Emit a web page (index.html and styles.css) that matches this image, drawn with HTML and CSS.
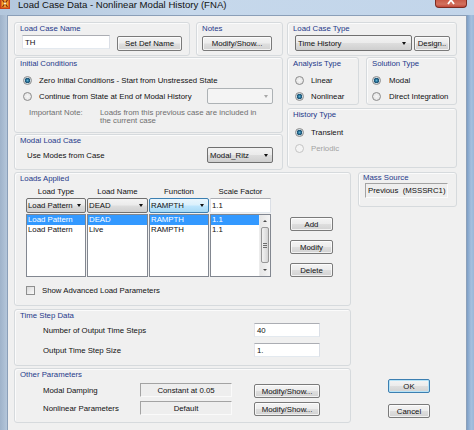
FILE: index.html
```html
<!DOCTYPE html>
<html>
<head>
<meta charset="utf-8">
<title>Load Case Data</title>
<link rel="stylesheet" href="styles.css">
</head>
<body>
<div class="window">
  <div class="titlebar">
    <svg class="appicon" viewBox="0 0 10 9" width="10" height="9">
      <rect x="0" y="0" width="10" height="9" fill="#c9401a"/>
      <rect x="1.5" y="0" width="7" height="7.5" fill="#f5a12a"/>
      <path d="M2.5 0 L7.5 7 M7.5 0 L2.5 7" stroke="#7a2410" stroke-width="1.2"/>
      <rect x="4" y="2.5" width="2" height="2" fill="#fff3c0"/>
    </svg>
    <div class="title">Load Case Data - Nonlinear Modal History (FNA)</div>
    <div class="close">
      <svg viewBox="0 0 32 8" width="32" height="8"><path d="M13 -3 L19 5 M19 -3 L13 5" stroke="#fff" stroke-width="1.8"/></svg>
    </div>
  </div>
  <div class="frame">
    <div class="fl"></div>
    <div class="client">
      <div class="top">
        <div class="col-left">
          <div class="row1">
            <div class="group g-lcn">
              <div class="glabel">Load Case Name</div>
              <div class="line">
                <div class="textbox tb-name">TH</div>
                <div class="btn b-setdef">Set Def Name</div>
              </div>
            </div>
            <div class="group g-notes">
              <div class="glabel">Notes</div>
              <div class="line"><div class="btn b-notes">Modify/Show...</div></div>
            </div>
          </div>
          <div class="group g-ic">
            <div class="glabel">Initial Conditions</div>
            <div class="opt first"><span class="radio on"></span><span>Zero Initial Conditions - Start from Unstressed State</span></div>
            <div class="opt"><span class="radio"></span><span>Continue from State at End of Modal History</span><div class="combo dis c-side"></div></div>
            <div class="note">
              <div class="note-k">Important Note:</div>
              <div class="note-v">Loads from this previous case are included in<br>the current case</div>
            </div>
          </div>
          <div class="group g-mlc">
            <div class="glabel">Modal Load Case</div>
            <div class="line mlc-line">
              <span class="mlc-text">Use Modes from Case</span>
              <div class="combo c-side">Modal_Ritz</div>
            </div>
          </div>
        </div>
        <div class="col-right">
          <div class="group g-lct">
            <div class="glabel">Load Case Type</div>
            <div class="line">
              <div class="combo c-type">Time History</div>
              <div class="btn b-design">Design..</div>
            </div>
          </div>
          <div class="at-st">
            <div class="group g-at">
              <div class="glabel">Analysis Type</div>
              <div class="opt first"><span class="radio"></span><span>Linear</span></div>
              <div class="opt"><span class="radio on"></span><span>Nonlinear</span></div>
            </div>
            <div class="group g-st">
              <div class="glabel">Solution Type</div>
              <div class="opt first"><span class="radio on"></span><span>Modal</span></div>
              <div class="opt"><span class="radio"></span><span>Direct Integration</span></div>
            </div>
          </div>
          <div class="group g-ht">
            <div class="glabel">History Type</div>
            <div class="opt first"><span class="radio on"></span><span>Transient</span></div>
            <div class="opt disabled"><span class="radio dis"></span><span>Periodic</span></div>
          </div>
        </div>
      </div>

      <div class="bottom">
        <div class="col-bl">
          <div class="group g-la">
            <div class="glabel">Loads Applied</div>
            <div class="la-body">
              <div class="ltable">
                <div class="th">Load Type</div>
                <div class="th">Load Name</div>
                <div class="th">Function</div>
                <div class="th">Scale Factor</div>
                <div class="combo c-cell">Load Pattern</div>
                <div class="combo c-cell">DEAD</div>
                <div class="combo c-cell hot">RAMPTH</div>
                <div class="textbox tb-cell">1.1</div>
                <div class="list">
                  <div class="li sel">Load Pattern</div>
                  <div class="li">Load Pattern</div>
                </div>
                <div class="list">
                  <div class="li sel">DEAD</div>
                  <div class="li">Live</div>
                </div>
                <div class="list">
                  <div class="li sel">RAMPTH</div>
                  <div class="li">RAMPTH</div>
                </div>
                <div class="list list-sb">
                  <div class="items">
                    <div class="li sel">1.1</div>
                    <div class="li">1.1</div>
                  </div>
                  <div class="sb">
                    <div class="sb-btn"><span class="tri up"></span></div>
                    <div class="thumb"><span class="grip"></span></div>
                    <div class="sb-track"></div>
                    <div class="sb-btn"><span class="tri down"></span></div>
                  </div>
                </div>
              </div>
              <div class="lbtns">
                <div class="btn b-list">Add</div>
                <div class="btn b-list">Modify</div>
                <div class="btn b-list">Delete</div>
              </div>
            </div>
            <div class="chkrow"><span class="check"></span><span>Show Advanced Load Parameters</span></div>
          </div>

          <div class="group g-tsd">
            <div class="glabel">Time Step Data</div>
            <div class="tsgrid">
              <span class="tslabel">Number of Output Time Steps</span>
              <div class="textbox tb-ts">40</div>
              <span class="tslabel">Output Time Step Size</span>
              <div class="textbox tb-ts">1.</div>
            </div>
          </div>

          <div class="group g-op">
            <div class="glabel">Other Parameters</div>
            <div class="opgrid">
              <span class="oplabel">Modal Damping</span>
              <div class="dbox">Constant at 0.05</div>
              <div class="btn b-op">Modify/Show...</div>
              <span class="oplabel">Nonlinear Parameters</span>
              <div class="dbox">Default</div>
              <div class="btn b-op">Modify/Show...</div>
            </div>
          </div>
        </div>

        <div class="col-br">
          <div class="group g-ms">
            <div class="glabel">Mass Source</div>
            <div class="dbox ms-box">Previous&nbsp; (MSSSRC1)</div>
          </div>
          <div class="okcancel">
            <div class="btn b-dlg default">OK</div>
            <div class="btn b-dlg">Cancel</div>
          </div>
        </div>
      </div>
    </div>
    <div class="fr"></div>
  </div>
</div>
</body>
</html>
```

FILE: styles.css
```css
* {
  box-sizing: border-box;
  margin: 0;
  padding: 0;
}

body {
  margin: 0;
  width: 474px;
  height: 430px;
  overflow: hidden;
  font-family: "Liberation Sans", Arial, sans-serif;
  font-size: 7.8px;
  color: #111;
}

.window {
  width: 474px;
  height: 430px;
  display: flex;
  flex-direction: column;
  background: #b5c8dd;
}

/* ---------- title bar ---------- */
.titlebar {
  height: 15px;
  display: flex;
  align-items: flex-start;
  background: linear-gradient(90deg, #b3c7dd 0%, #c6d8eb 40%, #c2d5ea 100%);
}

.appicon {
  display: block;
  flex: none;
}

.title {
  margin-left: 8px;
  font-size: 9.6px;
  line-height: 9px;
  color: #121212;
  white-space: nowrap;
}

.close {
  margin-left: auto;
  margin-right: 7px;
  width: 32px;
  height: 8px;
  border: 1px solid #7b2b20;
  border-top: none;
  border-radius: 0 0 4px 4px;
  background: linear-gradient(#c95a48, #d2725f 60%, #c2483a);
  overflow: hidden;
}

.close svg {
  display: block;
  margin-top: -1px;
  margin-left: -1px;
}

/* ---------- frame ---------- */
.frame {
  flex: 1;
  display: flex;
}

.fl {
  width: 7px;
  background: linear-gradient(90deg, #9fb3ca, #b4c6da);
}

.fr {
  width: 7px;
  background: linear-gradient(90deg, #7e9fc6, #a5c0de 60%, #9ab7d8);
}

.client {
  width: 460px;
  background: #f0f0f0;
  border: 1px solid #8b9fb8;
  border-bottom: none;
  padding: 6px 8px 0 6px;
}

/* ---------- layout ---------- */
.top {
  display: grid;
  grid-template-columns: 269px 170px;
  column-gap: 4px;
}

.col-left {
  display: flex;
  flex-direction: column;
  gap: 1px;
}

.row1 {
  display: flex;
  gap: 6px;
}

.col-right {
  display: flex;
  flex-direction: column;
  gap: 1px;
}

.at-st {
  display: flex;
  gap: 7px;
}

.bottom {
  margin-top: 2px;
  display: grid;
  grid-template-columns: 337px 99px;
  column-gap: 7px;
}

.col-bl {
  display: flex;
  flex-direction: column;
}

.col-br {
  display: flex;
  flex-direction: column;
}

/* ---------- group boxes ---------- */
.group {
  border: 1px solid #d6dadd;
  border-radius: 3px;
  box-shadow: inset 1px 1px 0 #fbfbfb;
  padding: 1px 5px 0 5px;
}

.glabel {
  line-height: 10px;
  color: #25398a;
  white-space: nowrap;
}

.g-lcn { width: 176px; height: 34px; }
.g-notes { width: 87px; height: 34px; }
.g-ic { height: 76px; }
.g-mlc { height: 36px; }
.g-lct { height: 34px; }
.g-at { width: 72px; height: 48px; }
.g-st { width: 91px; height: 48px; }
.g-ht { height: 60px; margin-top: 2px; }
.g-la { height: 134px; }
.g-tsd { height: 57px; margin-top: 3px; }
.g-op { height: 55px; margin-top: 2px; }
.g-ms { height: 35px; padding: 0 4px; }

.line {
  display: flex;
  align-items: flex-start;
  margin-top: 1px;
}

/* ---------- controls ---------- */
.btn {
  display: flex;
  align-items: center;
  justify-content: center;
  border: 1px solid #7a7a7a;
  border-radius: 2px;
  background: linear-gradient(#f4f4f4 0%, #ececec 48%, #dedede 52%, #d2d2d2 100%);
  box-shadow: inset 0 0 0 1px rgba(255, 255, 255, 0.7);
  white-space: nowrap;
  color: #111;
  flex: none;
}

.textbox {
  background: #fff;
  border: 1px solid;
  border-color: #abadb3 #dbdfe6 #e3e9ef #e2e3ea;
  padding-left: 2px;
  display: flex;
  align-items: center;
  white-space: nowrap;
}

.combo {
  display: flex;
  align-items: center;
  border: 1px solid #707070;
  border-radius: 2px;
  background: linear-gradient(#f3f3f3 0%, #ebebeb 48%, #dddddd 52%, #cfcfcf 100%);
  padding-left: 2px;
  white-space: nowrap;
  flex: none;
}

.combo::after {
  content: "";
  margin-left: auto;
  margin-right: 4px;
  border-left: 2.5px solid transparent;
  border-right: 2.5px solid transparent;
  border-top: 3px solid #111;
}

.combo.dis {
  border-color: #adb2b5;
  background: #f4f4f4;
}

.combo.dis::after {
  border-top-color: #a8a8a8;
}

.combo.hot {
  border-color: #3c7fb1;
  background: linear-gradient(#eaf6fd 0%, #d9f0fc 48%, #bee6fd 52%, #a7d9f5 100%);
}

.tb-name {
  width: 88px;
  height: 14px;
  margin-left: 2px;
}

.b-setdef {
  width: 65px;
  height: 15px;
  margin-left: 7px;
  margin-top: 1px;
}

.b-notes {
  width: 70px;
  height: 15px;
  margin-top: 1px;
}

.c-type {
  width: 117px;
  height: 16px;
  margin-left: 2px;
}

.c-type::after {
  margin-right: 5px;
}

.b-design {
  width: 36px;
  height: 15px;
  margin-left: 2px;
  margin-top: 1px;
}

/* radios */
.opt {
  display: flex;
  align-items: center;
  height: 16px;
  white-space: nowrap;
}

.opt.first {
  margin-top: 3px;
}

.g-ht .opt.first {
  margin-top: 4px;
}

.radio {
  flex: none;
  width: 9px;
  height: 9px;
  border-radius: 50%;
  border: 1px solid #8c8c8c;
  background: radial-gradient(circle, #f6f6f6 0, #dedede 100%);
  margin-right: 7px;
}

.radio.on {
  background: radial-gradient(circle, #5fb3d3 0, #2b7298 1.4px, #1a4d6c 2.5px, #cfdbe2 3px, #f5f5f5 100%);
}

.radio.dis {
  border-color: #c4c4c4;
  background: #f4f4f4;
}

.opt.disabled {
  color: #a3a3a3;
}

.g-ic .radio { margin-left: 3px; }
.g-at .radio, .g-ht .radio { margin-left: 2px; }
.g-st .radio { margin-right: 8px; }

.c-side {
  width: 66px;
  height: 16px;
  margin-left: auto;
  margin-right: 4px;
}

.note {
  display: flex;
  margin-top: 5px;
  line-height: 8px;
  color: #6f6f6f;
  white-space: nowrap;
}

.note-k {
  width: 71px;
  margin-left: 9px;
}

.mlc-line {
  align-items: center;
}

.mlc-text {
  margin-left: 7px;
}

/* ---------- loads applied ---------- */
.la-body {
  display: flex;
  margin-top: 3px;
}

.ltable {
  display: grid;
  grid-template-columns: 60px 61px 60px 61px;
  grid-template-rows: 10px 15px 63px;
  gap: 1px;
  margin-left: 6px;
}

.th {
  text-align: center;
  line-height: 10px;
  white-space: nowrap;
}

.c-cell {
  height: 15px;
  padding-left: 1px;
}

.tb-cell {
  height: 15px;
  padding-left: 1px;
}

.list {
  background: #fff;
  border: 1px solid #828790;
  overflow: hidden;
}

.li {
  line-height: 10px;
  padding-left: 1px;
  white-space: nowrap;
}

.li.sel {
  background: #3399ff;
  color: #fff;
}

.list-sb {
  display: flex;
}

.items {
  flex: 1;
}

.sb {
  width: 11px;
  display: flex;
  flex-direction: column;
  background: linear-gradient(90deg, #e6e6e6, #f4f4f4);
  border-left: 1px solid #ececec;
}

.sb-btn {
  height: 12px;
  display: flex;
  align-items: center;
  justify-content: center;
  flex: none;
}

.tri {
  border-left: 2px solid transparent;
  border-right: 2px solid transparent;
}

.tri.up {
  border-bottom: 2.5px solid #4d4d4d;
}

.tri.down {
  border-top: 2.5px solid #4d4d4d;
}

.thumb {
  height: 36px;
  margin: 0 1px;
  border: 1px solid #979797;
  border-radius: 2px;
  background: linear-gradient(90deg, #f2f2f2, #e4e4e4 50%, #d4d4d4);
  display: flex;
  align-items: center;
  justify-content: center;
  flex: none;
}

.grip {
  width: 4px;
  height: 5px;
  border-top: 1px solid #6e6e6e;
  border-bottom: 1px solid #6e6e6e;
  background: linear-gradient(#fff0 40%, #6e6e6e 40%, #6e6e6e 60%, #fff0 60%);
}

.sb-track {
  flex: 1;
}

.lbtns {
  display: flex;
  flex-direction: column;
  gap: 9px;
  margin-left: 19px;
  padding-top: 30px;
}

.b-list {
  width: 43px;
  height: 14px;
}

.chkrow {
  display: flex;
  align-items: center;
  height: 10px;
  margin-top: 8px;
  white-space: nowrap;
}

.check {
  flex: none;
  width: 9px;
  height: 9px;
  margin-left: 6px;
  margin-right: 7px;
  border: 1px solid #8e8f8f;
  background: linear-gradient(135deg, #d9d9d9, #fbfbfb);
}

/* ---------- time step data ---------- */
.tsgrid {
  display: grid;
  grid-template-columns: 211px 66px;
  grid-auto-rows: 14px;
  row-gap: 6px;
  margin-top: 2px;
  margin-left: 23px;
  align-items: center;
}

.tslabel {
  white-space: nowrap;
}

.tb-ts {
  height: 14px;
}

/* ---------- other parameters ---------- */
.opgrid {
  display: grid;
  grid-template-columns: 97px 92px 88px;
  grid-auto-rows: 15px;
  row-gap: 3px;
  margin-top: 3px;
  margin-left: 23px;
}

.oplabel {
  display: flex;
  align-items: center;
  white-space: nowrap;
}

.dbox {
  height: 14px;
  border: 1px solid;
  border-color: #a3a3a3 #fafafa #fafafa #a3a3a3;
  background: #eeeeee;
  display: flex;
  align-items: center;
  justify-content: center;
  white-space: nowrap;
}

.b-op {
  width: 66px;
  height: 14px;
  margin-top: 1px;
  margin-left: 22px;
}

/* ---------- mass source / ok-cancel ---------- */
.ms-box {
  width: 83px;
  height: 15px;
  margin-left: 2px;
  justify-content: flex-start;
  padding-left: 2px;
}

.okcancel {
  margin-top: auto;
  padding-bottom: 5px;
  padding-left: 30px;
  display: flex;
  flex-direction: column;
  gap: 11px;
}

.b-dlg {
  width: 42px;
  height: 14px;
}

.b-dlg.default {
  border-color: #3c7fb1;
  box-shadow: inset 0 0 0 1px #b7e3f7;
}
```
